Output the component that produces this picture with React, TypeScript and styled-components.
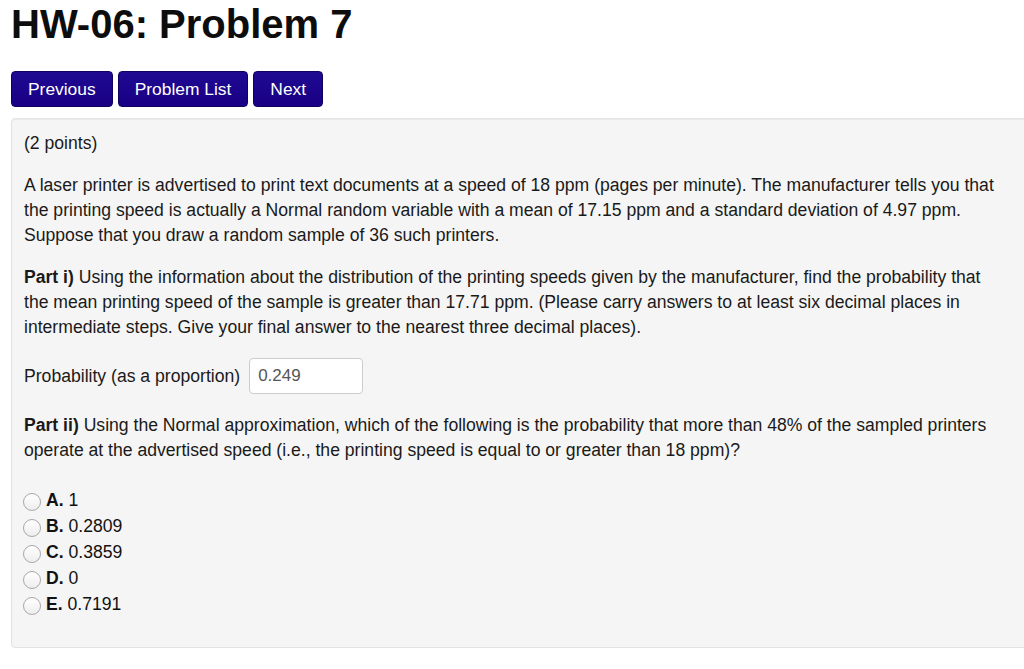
import React from 'react';
import styled, { createGlobalStyle } from 'styled-components';

const GlobalStyle = createGlobalStyle`
  html, body {
    margin: 0;
    padding: 0;
    background: #ffffff;
    overflow: hidden;
  }
  body {
    font-family: "Liberation Sans", Arial, Helvetica, sans-serif;
    color: #1a1a1a;
  }
`;

const options = [
  { letter: 'A.', value: '1' },
  { letter: 'B.', value: '0.2809' },
  { letter: 'C.', value: '0.3859' },
  { letter: 'D.', value: '0' },
  { letter: 'E.', value: '0.7191' },
];

export default function App() {
  return (
    <>
      <GlobalStyle />
      <Page>
        <Title>HW-06: Problem 7</Title>
        <NavBar>
          <NavButton>Previous</NavButton>
          <NavButton>Problem List</NavButton>
          <NavButton>Next</NavButton>
        </NavBar>
        <ProblemPanel>
          <Points>(2 points)</Points>
          <Paragraph>
            A laser printer is advertised to print text documents at a speed of 18 ppm (pages per minute). The
            manufacturer tells you that the printing speed is actually a Normal random variable with a mean of 17.15 ppm
            and a standard deviation of 4.97 ppm. Suppose that you draw a random sample of 36 such printers.
          </Paragraph>
          <Paragraph>
            <b>Part i)</b> Using the information about the distribution of the printing speeds given by the
            manufacturer, find the probability that the mean printing speed of the sample is greater than 17.71 ppm.
            (Please carry answers to at least six decimal places in intermediate steps. Give your final answer to the
            nearest three decimal places).
          </Paragraph>
          <AnswerRow>
            <span>Probability (as a proportion)</span>
            <AnswerInput defaultValue="0.249" />
          </AnswerRow>
          <Paragraph $gap={24}>
            <b>Part ii)</b> Using the Normal approximation, which of the following is the probability that more than
            48% of the sampled printers operate at the advertised speed (i.e., the printing speed is equal to or
            greater than 18 ppm)?
          </Paragraph>
          <OptionList>
            {options.map((o) => (
              <Option key={o.letter}>
                <Radio />
                <b>{o.letter}</b>&nbsp;{o.value}
              </Option>
            ))}
          </OptionList>
        </ProblemPanel>
      </Page>
    </>
  );
}

const Page = styled.div`
  padding: 1px 0 0 11px;
`;

const Title = styled.h1`
  margin: 0;
  font-size: 40px;
  line-height: 46px;
  font-weight: bold;
  color: #0d0d0d;
`;

const NavBar = styled.div`
  display: flex;
  gap: 5px;
  margin-top: 24px;
`;

const NavButton = styled.button`
  height: 36px;
  padding: 0 16px;
  border: 1px solid #12005e;
  border-radius: 4px;
  background: linear-gradient(#1f0a92, #190085);
  color: #ffffff;
  font-family: "Liberation Sans", Arial, sans-serif;
  font-size: 17.4px;
  cursor: pointer;
`;

const ProblemPanel = styled.div`
  margin-top: 11px;
  width: 1030px;
  box-sizing: border-box;
  padding: 12px 37px 30px 12px;
  background: #f5f5f5;
  border: 1px solid #e3e3e3;
  border-radius: 4px;
  box-shadow: inset 0 1px 1px rgba(0, 0, 0, 0.05);
  font-size: 17.6px;
  line-height: 25px;
`;

const Points = styled.div`
  margin-bottom: 17px;
`;

const Paragraph = styled.p<{ $gap?: number }>`
  margin: 0 0 ${(p) => p.$gap ?? 17}px;
`;

const AnswerRow = styled.div`
  display: flex;
  align-items: center;
  gap: 9px;
  margin: 18px 0 19px;
`;

const AnswerInput = styled.input`
  width: 114px;
  height: 36px;
  box-sizing: border-box;
  padding: 0 8px;
  border: 1px solid #cccccc;
  border-radius: 4px;
  background: #ffffff;
  color: #555555;
  font-family: "Liberation Sans", Arial, sans-serif;
  font-size: 17px;
`;

const OptionList = styled.div`
  display: flex;
  flex-direction: column;
`;

const Option = styled.label`
  display: flex;
  align-items: center;
  height: 26px;
  color: #111111;
`;

const Radio = styled.span`
  width: 16px;
  height: 16px;
  margin: 3px 5px 0 -1px;
  border: 1px solid #a8a8a8;
  border-radius: 50%;
  background: linear-gradient(#ffffff, #eeeeee);
  flex-shrink: 0;
`;
